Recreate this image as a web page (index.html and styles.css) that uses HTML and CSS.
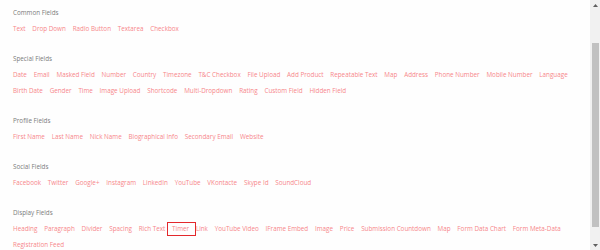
FILE: index.html
```html
<!DOCTYPE html>
<html>
<head>
<meta charset="utf-8">
<link rel="stylesheet" href="styles.css">
</head>
<body>
<div class="page">
  <main class="content">
    <section class="group">
      <h3 class="group-title">Common Fields</h3>
      <div class="fields">
        <span class="field">Text</span><span class="field">Drop Down</span><span class="field">Radio Button</span><span class="field">Textarea</span><span class="field">Checkbox</span>
      </div>
    </section>
    <section class="group">
      <h3 class="group-title">Special Fields</h3>
      <div class="fields">
        <span class="field">Date</span><span class="field">Email</span><span class="field">Masked Field</span><span class="field">Number</span><span class="field">Country</span><span class="field">Timezone</span><span class="field">T&amp;C Checkbox</span><span class="field">File Upload</span><span class="field">Add Product</span><span class="field">Repeatable Text</span><span class="field">Map</span><span class="field">Address</span><span class="field">Phone Number</span><span class="field">Mobile Number</span><span class="field">Language</span><span class="field">Birth Date</span><span class="field">Gender</span><span class="field">Time</span><span class="field">Image Upload</span><span class="field">Shortcode</span><span class="field">Multi-Dropdown</span><span class="field">Rating</span><span class="field">Custom Field</span><span class="field">Hidden Field</span>
      </div>
    </section>
    <section class="group">
      <h3 class="group-title">Profile Fields</h3>
      <div class="fields">
        <span class="field">First Name</span><span class="field">Last Name</span><span class="field">Nick Name</span><span class="field">Biographical Info</span><span class="field">Secondary Email</span><span class="field">Website</span>
      </div>
    </section>
    <section class="group">
      <h3 class="group-title">Social Fields</h3>
      <div class="fields">
        <span class="field">Facebook</span><span class="field">Twitter</span><span class="field">Google+</span><span class="field">Instagram</span><span class="field">LinkedIn</span><span class="field">YouTube</span><span class="field">VKontacte</span><span class="field">Skype Id</span><span class="field">SoundCloud</span>
      </div>
    </section>
    <section class="group">
      <h3 class="group-title">Display Fields</h3>
      <div class="fields">
        <span class="field">Heading</span><span class="field">Paragraph</span><span class="field">Divider</span><span class="field">Spacing</span><span class="field">Rich Text</span><span class="field field-highlight">Timer</span><span class="field">Link</span><span class="field">YouTube Video</span><span class="field">IFrame Embed</span><span class="field">Image</span><span class="field">Price</span><span class="field">Submission Countdown</span><span class="field">Map</span><span class="field">Form Data Chart</span><span class="field">Form Meta-Data</span><span class="field">Registration Feed</span>
      </div>
    </section>
  </main>
  <aside class="scrollbar">
    <div class="sb-btn"><svg width="5" height="3" viewBox="0 0 5 3"><polygon points="2.5,0 5,3 0,3" fill="#606060"/></svg></div>
    <div class="sb-track"><div class="sb-thumb"></div></div>
    <div class="sb-btn"><svg width="5" height="3" viewBox="0 0 5 3"><polygon points="0,0 5,0 2.5,3" fill="#606060"/></svg></div>
  </aside>
</div>
</body>
</html>
```
FILE: styles.css
```css
html, body {
  margin: 0;
  padding: 0;
  background: #fefefe;
}
body {
  font-family: "Open Sans", "Noto Sans", sans-serif;
}
.page {
  display: flex;
  width: 600px;
  height: 250px;
  overflow: hidden;
}
.content {
  flex: 1;
  padding: 5px 4px 0 13px;
}
.group {
  margin-bottom: 14px;
}
.group-title {
  margin: 0;
  font-size: 6.3px;
  font-weight: normal;
  line-height: 16px;
  color: #7c7c7c;
}
.fields {
  display: flex;
  flex-wrap: wrap;
  column-gap: 6.8px;
  line-height: 16px;
  font-size: 6.3px;
  color: #f7878b;
}
.field {
  white-space: nowrap;
}
.field-highlight {
  position: relative;
}
.field-highlight::after {
  content: "";
  position: absolute;
  left: -5px;
  right: -7px;
  top: 1px;
  bottom: 1px;
  border: 1px solid #e3282c;
}
.scrollbar {
  width: 10px;
  display: flex;
  flex-direction: column;
  background: #f1f1f1;
}
.sb-btn {
  height: 10px;
  display: flex;
  align-items: center;
  justify-content: center;
}
.sb-track {
  flex: 1;
  padding: 33px 1px 13px 2px;
  display: flex;
}
.sb-thumb {
  flex: 1;
  background: #c1c1c1;
}
```
